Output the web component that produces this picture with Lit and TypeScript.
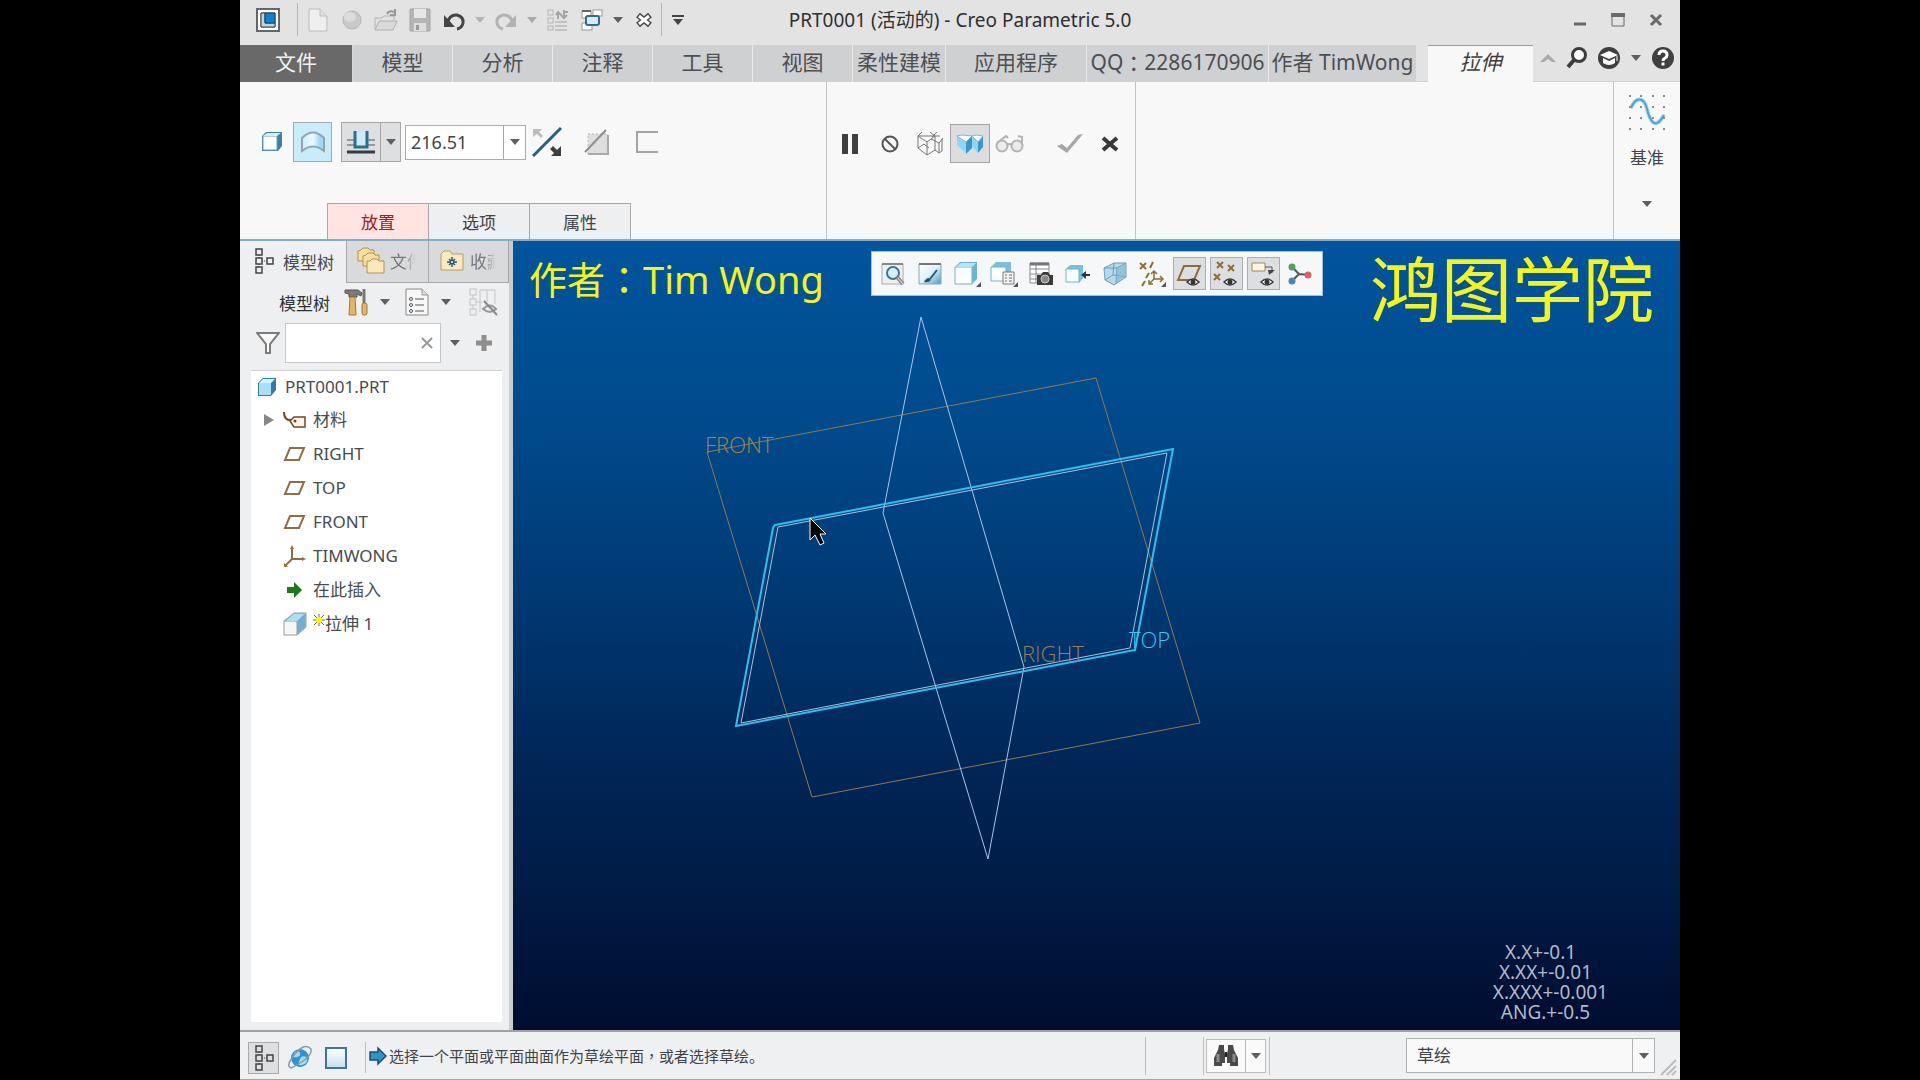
import { LitElement, html, svg, css, TemplateResult, SVGTemplateResult } from 'lit';
import { customElement } from 'lit/decorators.js';
import { classMap } from 'lit/directives/class-map.js';

const icon = (w: number, h: number, body: SVGTemplateResult) =>
  html`<svg class="icon" width=${w} height=${h} viewBox="0 0 ${w} ${h}" fill="none" aria-hidden="true">${body}</svg>`;

const arrow = (color = '#5f5f5f') => icon(12, 8, svg`<path d="M1 1h10L6 7z" fill=${color}/>`);

const treeNodes = (c: string) => svg`
  <g stroke=${c} stroke-width="1.500"><rect x="2" y="1" width="6" height="6"/><rect x="2" y="10" width="6" height="6"/>
  <rect x="2" y="19" width="6" height="6"/><rect x="13" y="10" width="6" height="6"/></g>
  <path d="M5 7v3M5 16v3M8 13h5" stroke=${c} stroke-dasharray="1 1"/>`;

const eye = svg`<path d="M12 23q6-6 12 0q-6 6-12 0z" fill="#fff" stroke="#3c3c3c" stroke-width="1.500"/><circle cx="18" cy="23" r="2.500" fill="#333"/>`;

const icons = {
  app: icon(24, 24, svg`<rect x="1" y="1" width="22" height="22" fill="#fff" stroke="#666" stroke-width="2"/>
    <path d="M5 5h14v14H5z" fill="#fff" stroke="#555" stroke-width="1"/><path d="M5 5h4v10h10v4H5z" fill="#bcd3e2" stroke="#444"/>
    <path d="M9 5h10v10H9z" fill="#0a82d8" stroke="#145"/>`),
  file: icon(22, 24, svg`<path d="M2 1h11l7 7v15H2z" fill="#efefef" stroke="#bdbdbd"/><path d="M13 1v7h7" fill="#ddd" stroke="#bdbdbd"/>`),
  globe: icon(22, 22, svg`<circle cx="11" cy="11" r="9" fill="#c9c9c9" stroke="#b5b5b5"/><ellipse cx="9" cy="8" rx="6" ry="5" fill="#dcdcdc"/>`),
  open: icon(26, 24, svg`<path d="M2 21V10h7l2-2h10v4" fill="#e2e2e2" stroke="#b0b0b0"/><path d="M2 22l4-9h18l-4 9z" fill="#d9d9d9" stroke="#b0b0b0"/>
    <path d="M14 6q2-4 7-2M22 1v6h-5" stroke="#999" stroke-width="2"/>`),
  save: icon(24, 24, svg`<path d="M2 1h20v22H2z" fill="#b5b5b5" stroke="#a5a5a5"/><path d="M6 1h12v9H6z" fill="#e6e6e6"/><path d="M6 15h12v8H6z" fill="#ddd"/><path d="M8 17h3v5H8z" fill="#999"/>`),
  undo: icon(24, 22, svg`<path d="M5 14Q8 5 15 6q7 2 6 8-1 5-6 6" stroke="#454545" stroke-width="3"/><path d="M2 6v12h11z" fill="#454545"/>`),
  redo: icon(24, 22, svg`<path d="M19 14Q16 5 9 6q-7 2-6 8 1 5 6 6" stroke="#b2b2b2" stroke-width="3"/><path d="M22 6v12H11z" fill="#b2b2b2"/>`),
  regen: icon(24, 24, svg`<g stroke="#b5b5b5"><rect x="2" y="2" width="5" height="5"/><rect x="2" y="10" width="5" height="5"/><rect x="2" y="18" width="5" height="4"/></g>
    <path d="M9 14h12M9 18h12M9 22h12" stroke="#c2c2c2" stroke-width="2"/><path d="M12 11V4M10 7l2-3 3 3M18 2v7M15 7l3 3 3-3M18 4h4" stroke="#a5a5a5" stroke-width="2"/>`),
  windows: icon(24, 24, svg`<rect x="2" y="3" width="9" height="7" fill="#fff" stroke="#999"/><path d="M2 3h9" stroke="#666" stroke-width="2"/>
    <rect x="13" y="2" width="9" height="6" fill="#fff" stroke="#999"/><rect x="2" y="15" width="10" height="7" fill="#fff" stroke="#999"/>
    <rect x="6" y="8" width="13" height="9" rx="2" fill="#d6ecf8" stroke="#2d6d91" stroke-width="2"/>`),
  closeWin: icon(20, 16, svg`<path d="M4 3l12 10M16 3L4 13" stroke="#4a4a4a" stroke-width="6"/><path d="M5 4l10 8M15 4L5 12" stroke="#f8f8f8" stroke-width="3"/>`),
  custom: icon(14, 12, svg`<path d="M1 2h12" stroke="#444" stroke-width="2"/><path d="M2 5h10l-5 6z" fill="#444"/>`),
  min: icon(16, 16, svg`<path d="M2 12h12" stroke="#666" stroke-width="3"/>`),
  max: icon(16, 16, svg`<path d="M2 2h12v12H2z" stroke="#6a6a6a" stroke-width="1"/><path d="M1 3h14" stroke="#6a6a6a" stroke-width="4"/>`),
  close: icon(16, 16, svg`<path d="M3 3l10 10M13 3L3 13" stroke="#6a6a6a" stroke-width="3"/>`),
  up: icon(18, 10, svg`<path d="M1 9l8-8 8 8H13L9 6 5 9z" fill="#ababab"/>`),
  search: icon(22, 22, svg`<circle cx="13" cy="8" r="6.500" fill="#fafafa" stroke="#3d3d3d" stroke-width="3"/><path d="M8 13l-6 7" stroke="#3d3d3d" stroke-width="4"/>`),
  hat: icon(24, 24, svg`<circle cx="12" cy="12" r="11" fill="#3f3f3f"/><path d="M3 9l9-4 9 4-9 4z" fill="#fff"/><path d="M6 12v5q6 4 12 0v-5l-6 3z" fill="#fff"/><path d="M20 10v5" stroke="#fff"/>`),
  help: icon(24, 24, svg`<circle cx="12" cy="12" r="11" fill="#3f3f3f"/><path d="M8 9q0-4 4-4t4 4q0 2-2 3t-2 3" stroke="#fff" stroke-width="3"/><path d="M10.500 16.500h3v3h-3z" fill="#fff"/>`),
  solid: icon(24, 24, svg`<path d="M2 6l4-4h16v14l-4 5H2z" fill="#3d80a3"/><path d="M3 6h14v14H3z" fill="#fff" stroke="#5fa3c4"/><path d="M3 6l4-3h14l-4 3z" fill="#d3eef9"/>`),
  surface: icon(26, 26, svg`<path d="M2 22V9q11-11 22 0v13q-11-9-22 0z" fill="url(#surf)" stroke="#94a4ad" stroke-width="2"/>
    <defs><linearGradient id="surf"><stop stop-color="#c9edfb"/><stop offset="0.500" stop-color="#eefaff"/><stop offset="0.800" stop-color="#9bd9f5"/></linearGradient></defs>`),
  depth: icon(30, 26, svg`<path d="M1 11h28M1 16h28" stroke="#9a9a9a" stroke-width="2"/><path d="M9 3h12v15H9z" fill="#c9ecfb"/><path d="M9 2v16h12V2" stroke="#2c6d90" stroke-width="3"/><path d="M1 23h28" stroke="#3a3a3a" stroke-width="3"/>`),
  flip: icon(30, 30, svg`<path d="M1 29L29 1" stroke="#25607f" stroke-width="3"/><path d="M1 2h9L7 5l4 4-2 2-4-4-4 3z" fill="#bdbdbd"/><path d="M29 29H19l3-3-4-4 3-3 4 4 4-4z" fill="#3f3f3f"/>`),
  cut: icon(28, 28, svg`<path d="M5 6h20v20H5z" fill="#dedede"/><path d="M5 26h20V7" stroke="#a9a9a9" stroke-width="2"/><path d="M5 26V6h20" stroke="#b3b3b3" stroke-dasharray="2 2"/><path d="M2 24L23 2" stroke="#8c8c8c" stroke-width="2"/>`),
  thicken: icon(22, 24, svg`<path d="M22 2H1v20h21" stroke="#a3a3a3" stroke-width="2"/>`),
  pause: icon(18, 22, svg`<path d="M1 1h6v20H1zM11 1h6v20h-6z" fill="#3f3f3f"/>`),
  none: icon(20, 20, svg`<circle cx="10" cy="10" r="7.500" stroke="#555" stroke-width="2"/><path d="M5 5l10 10" stroke="#555" stroke-width="2"/>`),
  wire: icon(30, 26, svg`<path d="M3 5h22M3 5v12l9 7M3 5l9 6v13M12 11l8-6M12 24l8-5M20 5v14M20 5l-5-4M16 8l8 4M24 12v10M24 12l4-5M24 22l3-2M3 5l4-4M17 6l5-5M20 19l4 3M27 8v12M3 17l6-4 5 4" stroke="#777"/>`),
  attached: icon(28, 22, svg`<path d="M1 3l9 5v12L1 12z" fill="#8fd5f5"/><path d="M10 8l6-5v12l-6 6z" fill="#3a97cc"/><path d="M1 3l5-1 10 1-6 6z" fill="#fbfeff" stroke="#8fb2c4"/>
    <path d="M16 3l6 5v12l-6-6z" fill="#8fd5f5"/><path d="M22 8l5-5v11l-5 6z" fill="#3a97cc"/><path d="M16 3l4-1 7 1-5 6z" fill="#fbfeff" stroke="#8fb2c4"/>`),
  glasses: icon(30, 20, svg`<circle cx="7" cy="12" r="5.500" stroke="#b3b3b3" stroke-width="2" fill="#ececec"/><circle cx="22" cy="12" r="5.500" stroke="#b3b3b3" stroke-width="2" fill="#ececec"/><path d="M12 11q2-2 5 0M2 9l9-7 2 2M27 10V3l-4-1" stroke="#b3b3b3" stroke-width="2"/>`),
  check: icon(28, 22, svg`<path d="M1 13l5-2 5 4L22 2l5-1L11 20z" fill="#a6a6a6"/>`),
  cross: icon(20, 16, svg`<path d="M3 2l14 12M17 2L3 14" stroke="#383838" stroke-width="4"/>`),
  datum: icon(38, 38, svg`<path d="M3 14C8 2 16 3 19 15s8 22 17 6" stroke="#a5daf2" stroke-width="4"/><path d="M3 14C8 2 16 3 19 15s8 22 17 6" stroke="#4aa3d0" stroke-width="2"/>
    <g fill="#8a8a8a">${[2, 13, 24, 35].map(y => [1, 12, 24, 35].map(x => svg`<rect x=${x} y=${y - 1} width="2" height="2"/>`))}</g>`),
  tree: icon(20, 26, treeNodes('#444')),
  folders: icon(28, 28, svg`<g fill="#f6dfa6" stroke="#b8904a"><path d="M1 14V4l3-1 2-2h5l2 2h4v11z"/><path d="M6 19V9l3-1 2-2h5l2 2h4v11z"/><path d="M10 26V14h3l2-2h5l2 2h5v12z" fill="#fbe8b8"/></g>`),
  fav: icon(26, 22, svg`<path d="M2 20V4l3-3h6l2 3h11v16z" fill="#fbe9c0" stroke="#c09a5a"/><path d="M13 7v10M8 12h10M10 9l6 6M16 9l-6 6" stroke="#1c5672" stroke-width="1.500"/><circle cx="13" cy="12" r="1" fill="#fff"/>`),
  tools: icon(24, 28, svg`<path d="M1 2h13l4 3-1 3-4-2v3H5V6L1 5z" fill="#7b7b7b" stroke="#555"/><path d="M6 9h5l1 18H5z" fill="#e3b564" stroke="#a9772d"/><path d="M20 1v14" stroke="#777" stroke-width="3"/><rect x="18" y="15" width="5" height="12" rx="2" fill="#e3b564" stroke="#a9772d"/>`),
  settings: icon(24, 28, svg`<path d="M1 1h16l6 6v20H1z" fill="#f7f7f7" stroke="#888"/><path d="M17 1v6h6" fill="#ddd" stroke="#999"/><g stroke="#555"><circle cx="6" cy="11" r="1.500"/><circle cx="6" cy="17" r="1.500"/><circle cx="6" cy="23" r="1.500"/><path d="M10 11h9M10 17h9M10 23h9"/></g>`),
  hidden: icon(30, 28, svg`<g stroke="#c4c4c4"><rect x="2" y="1" width="6" height="6"/><rect x="2" y="11" width="6" height="6"/><rect x="2" y="21" width="6" height="6"/><path d="M5 7v4M5 17v4M8 14h6M12 2h15v14M12 2v22M19 2v12"/></g>
    <path d="M15 21q7-7 13 0-6 6-13 0z" stroke="#999" stroke-width="2"/><path d="M16 13l13 14" stroke="#888" stroke-width="2"/>`),
  filter: icon(24, 24, svg`<path d="M1 2h22l-9 11v9h-4v-9z" fill="#fafafa" stroke="#7c7c7c" stroke-width="2"/>`),
  clear: icon(14, 14, svg`<path d="M2 2l10 10M12 2L2 12" stroke="#989898" stroke-width="2"/>`),
  plus: icon(18, 18, svg`<path d="M9 1v16M1 9h16" stroke="#8e8e8e" stroke-width="5"/>`),
  part: icon(20, 20, svg`<path d="M1 6l5-5h13v12l-5 6H1z" fill="#2e7da3"/><path d="M2 6h12v12H2z" fill="#a5e0f6"/><path d="M2 6l4-4h12l-4 4z" fill="#d8f4fd"/>`),
  expand: icon(12, 14, svg`<path d="M1 1l10 6-10 6z" fill="#888"/>`),
  material: icon(24, 18, svg`<path d="M1 1q0 9 8 8" stroke="#6a4a28" stroke-width="2"/><path d="M7 10l4-4h11v10H11z" fill="#fdf3e6" stroke="#6a4a28" stroke-width="1.500"/><circle cx="12" cy="10" r="1.500" fill="#6a4a28"/>`),
  plane: icon(24, 18, svg`<path d="M7 3h14l-5 12H2z" stroke="#8b6f47" stroke-width="2"/>`),
  csys: icon(24, 24, svg`<path d="M9 3v12h12M9 15l-7 7" stroke="#8b6f47" stroke-width="2"/><path d="M7 5l2-4 2 4zM19 13l4 2-4 2zM1 19v4h4z" fill="#8b6f47"/>`),
  insert: icon(24, 18, svg`<path d="M4 6h7V1l8 8-8 8v-5H4z" fill="#1a7a1a"/>`),
  extrude: icon(24, 24, svg`<path d="M1 9l10-8h12v14l-9 8z" fill="#8fc4de" stroke="#7aa6bd"/><path d="M1 9h13v14H1z" fill="#f6f6f6" stroke="#9a9a9a"/><path d="M14 9l8-7v13l-8 8z" fill="#74aecd"/><path d="M3 9l8-7h10l-7 7z" fill="#b5dcee"/>`),
  star: icon(12, 12, svg`<path d="M6 0v12M0 6h12M1 1l10 10M11 1L1 11" stroke="#77701a"/><circle cx="6" cy="6" r="3" fill="#fff200"/>`),
  zoom: icon(24, 24, svg`<path d="M1 2h21v20H1z" fill="#eef0f0" stroke="#aaa"/><path d="M1 2h21" stroke="#888" stroke-width="2"/><circle cx="12" cy="11" r="6" fill="#d5eff8" stroke="#387792" stroke-width="2"/><path d="M16 15l6 7" stroke="#888" stroke-width="4"/><path d="M17 16l5 6" stroke="#eee" stroke-width="1"/>`),
  repaint: icon(24, 24, svg`<path d="M1 2h22v20H1z" fill="url(#rp)" stroke="#8aa"/><path d="M1 2h22" stroke="#777" stroke-width="2"/><path d="M19 8l-7 9" stroke="#225d7c" stroke-width="2"/><path d="M6 20q2-4 5-4l2 2q-2 3-7 2z" fill="#1f5674"/>
    <defs><linearGradient id="rp" x2="1" y2="1"><stop stop-color="#fff"/><stop offset="0.500" stop-color="#dff2fa"/><stop offset="1" stop-color="#3e9ac4"/></linearGradient></defs>`),
  shade: icon(28, 28, svg`<path d="M2 7l5-5h17v17l-5 5z" fill="#69b5d8"/><path d="M2 7h17v17H2z" fill="#fafeff" stroke="#71b2d0"/><path d="M3 7l5-4h15l-4 4z" fill="#b8e4f6"/><path d="M28 22v5h-5z" fill="#555"/>`),
  views: icon(28, 28, svg`<path d="M1 7l5-5h15v17l-3 3z" fill="#7abfdd"/><path d="M1 7h15v14H1z" fill="#fafeff" stroke="#71b2d0"/><path d="M13 12h11v12H13z" fill="#f5f5f5" stroke="#777"/><path d="M15 15h2M19 15h3M15 18h2M19 18h3M15 21h2M19 21h3" stroke="#666"/><path d="M28 22v5h-5z" fill="#555"/>`),
  camera: icon(26, 26, svg`<path d="M2 2h19v20H2z" fill="#fff" stroke="#888"/><path d="M2 3h19" stroke="#777" stroke-width="3"/><path d="M2 8h19M2 13h19M2 18h19M8 2v20" stroke="#888"/><path d="M9 14h4l2-3h5l2 3h3v10H9z" fill="#3b3b3b"/><circle cx="17" cy="18" r="4" fill="#888" stroke="#ccc"/>`),
  section: icon(26, 24, svg`<path d="M1 7l4-4h13v13l-4 5z" fill="#7abfdd"/><path d="M1 7h13v13H1z" fill="#fafeff" stroke="#71b2d0"/><path d="M25 13h-6" stroke="#333" stroke-width="2"/><path d="M16 13l5-4v8z" fill="#333"/>`),
  persp: icon(26, 26, svg`<path d="M2 7l10-5h12v14l-12 8-9-5z" fill="#b6d9ea" stroke="#6d9db5"/><path d="M2 7h13l9-5M15 7l-1 16M3 19l8-5 13 2M12 2l-1 12" stroke="#6d9db5"/><path d="M15 7l9-4v12l-10 7z" fill="#7cb5d2" opacity="0.600"/>`),
  datums: icon(28, 28, svg`<path d="M2 3l6 6M8 3L2 9M15 2l-3 6M11 13l-3 5M7 21l-3 5" stroke="#8b6f35" stroke-width="2"/><path d="M16 12v7h8M16 19l-4 4M13 14l3-3 3 3M22 16l3 3-3 3M11 20v4h4" stroke="#8b6f35" stroke-width="1.500"/><path d="M28 22v5h-5z" fill="#555"/>`),
  planeOn: icon(28, 30, svg`<path d="M9 7h16l-6 14H3z" stroke="#8b6f35" stroke-width="2"/>${eye}`),
  pointOn: icon(28, 30, svg`<path d="M5 3l6 6M11 3L5 9M16 6l6 6M22 6l-6 6M2 15l6 6M8 15l-6 6" stroke="#8b6f35" stroke-width="2"/>${eye}`),
  noteOn: icon(28, 30, svg`<path d="M3 4h13v8H3z" fill="#fff6df" stroke="#9b8a5a"/><path d="M16 8h7v6" stroke="#555"/><path d="M19 11h7l-6 5z" fill="#444"/>${eye}`),
  spin: icon(26, 24, svg`<path d="M12 12L5 5M12 12l10 1M12 12l-7 7" stroke="#555" stroke-width="2"/><circle cx="5" cy="5" r="3.500" fill="#5b9a5b"/><circle cx="21" cy="13" r="3.500" fill="#e06060"/><circle cx="5" cy="19" r="3.500" fill="#4b86b4"/>`),
  browser: icon(26, 26, svg`<circle cx="13" cy="13" r="9" fill="#2f94cf"/><path d="M8 7q4-2 5 1t-3 4-4-1zM14 12q5-2 6 2t-5 6-1-8z" fill="#a8dbf5"/><path d="M4 23Q-2 21 8 9T24 4q1 6-8 12T4 23z" stroke="#8b9aa3" stroke-width="1.500"/>`),
  page: icon(24, 24, svg`<path d="M2 2h20v20H2z" fill="url(#pg)" stroke="#3f7593" stroke-width="2"/><defs><linearGradient id="pg" x2="0" y2="1"><stop stop-color="#fff"/><stop offset="1" stop-color="#c3e0ee"/></linearGradient></defs>`),
  next: icon(18, 20, svg`<path d="M1 6h8V2l8 8-8 8v-4H1z" fill="#2d93cc" stroke="#1c4f6c" stroke-width="1.500"/>`),
  find: icon(26, 24, svg`<path d="M6 1h5v4l1 5v9H9v3H1v-8L5 6z" fill="#4a4a4a"/><path d="M20 1h-5v4l-1 5v9h3v3h8v-8l-4-8z" fill="#4a4a4a"/><path d="M5 10v8M21 10v8" stroke="#8a8a8a" stroke-width="3"/><path d="M12 8h2v5h-2z" fill="#222"/>`),
  grip: icon(18, 18, svg`<path d="M2 17L17 2M8 17l9-9M13 17l4-4" stroke="#bcbcbc" stroke-width="2"/>`),
};

/* Shared look of every flat button and icon. */
const base = css`
  *, :host { box-sizing: border-box; }
  button, input, select { font: inherit; color: inherit; margin: 0; padding: 0; border: 0; background: none; border-radius: 0; outline: none; }
  button { display: flex; align-items: center; justify-content: center; flex: none; }
  .icon { display: block; flex: none; }
`;

/* Full-width colon and comma set in the middle of their cell. */
const mid = (t: string) => html`<span class="mid">${t}</span>`;

@customElement('title-bar')
class TitleBar extends LitElement {
  static styles = [base, css`
    :host { display: grid; grid-template-columns: 1fr auto 1fr; align-items: center; height: 45px; padding: 0 16px 6px; background: #e3e3e3; color: #2f2f2f; font-size: 19px; }
    .quick { display: flex; align-items: center; }
    .quick button { width: 34px; height: 32px; }
    .quick .drop { width: 18px; }
    .app { margin-right: 17px; }
    .rule { width: 1px; height: 33px; background: #b5b5b5; margin-right: 3px; }
    .quick .custom { width: 26px; }
    h1 { margin: 0; font-size: inherit; font-weight: 400; line-height: 26px; white-space: nowrap; }
    .window { display: flex; justify-content: flex-end; gap: 22px; }
    .window button { width: 16px; height: 24px; }
  `];
  render() {
    return html`
      <div class="quick">
        <span class="app">${icons.app}</span><span class="rule"></span>
        <button aria-label="新建">${icons.file}</button>
        <button aria-label="联机">${icons.globe}</button>
        <button aria-label="打开">${icons.open}</button>
        <button aria-label="保存">${icons.save}</button>
        <button aria-label="撤消">${icons.undo}</button>
        <button class="drop" aria-label="撤消列表">${arrow('#b4b4b4')}</button>
        <button aria-label="重做">${icons.redo}</button>
        <button class="drop" aria-label="重做列表">${arrow('#a9a9a9')}</button>
        <button aria-label="重新生成">${icons.regen}</button>
        <button aria-label="窗口">${icons.windows}</button>
        <button class="drop" aria-label="窗口列表">${arrow()}</button>
        <button aria-label="关闭窗口">${icons.closeWin}</button>
        <span class="rule"></span>
        <button class="custom" aria-label="自定义快速访问工具栏">${icons.custom}</button>
      </div>
      <h1>PRT0001 (活动的) - Creo Parametric 5.0</h1>
      <div class="window">
        <button aria-label="最小化">${icons.min}</button>
        <button aria-label="最大化">${icons.max}</button>
        <button aria-label="关闭">${icons.close}</button>
      </div>`;
  }
}

@customElement('ribbon-tabs')
class RibbonTabs extends LitElement {
  static styles = [base, css`
    :host { display: flex; height: 37px; background: #e3e3e3; color: #4c4f52; font-size: 21px; line-height: 30px; box-shadow: inset 0 -1px #cfcfcf; }
    button { width: 100px; padding-bottom: 4px; background: #cfd0d2; border-right: 1px solid #e9e9e9; white-space: nowrap; overflow: hidden; }
    .file { width: 113px; background: #696969; color: #f2f2f2; border-right-color: #d8d8d8; }
    .snug { width: 93px; }
    .wide { width: 141px; }
    .qq { width: 182px; }
    .author { width: 147px; border-right: 0; }
    .active { width: 105px; margin-left: 12px; background: #f8f8f8; border-right: 0; border-top: 1px solid #9a9a9a; font-style: italic; color: #3d3d3d; }
    .mid { font-family: "Noto Sans CJK TC", sans-serif; }
    .help { flex: 1; display: flex; align-items: center; justify-content: flex-end; padding: 0 5px 12px 0; gap: 9px; }
    .help button { width: auto; background: none; border: 0; padding: 0; }
  `];
  render() {
    return html`
      <button class="file">文件</button>
      ${['模型', '分析', '注释', '工具', '视图'].map(t => html`<button>${t}</button>`)}
      <button class="snug">柔性建模</button>
      <button class="wide">应用程序</button>
      <button class="qq">QQ${mid('：')}2286170906</button>
      <button class="author">作者 TimWong</button>
      <button class="active">拉伸</button>
      <div class="help">
        <button aria-label="最小化功能区">${icons.up}</button>
        <button aria-label="搜索">${icons.search}</button>
        <button aria-label="学习">${icons.hat}</button>
        <button aria-label="学习列表">${arrow()}</button>
        <button aria-label="帮助">${icons.help}</button>
      </div>`;
  }
}

@customElement('ribbon-panel')
class RibbonPanel extends LitElement {
  static styles = [base, css`
    :host { display: grid; grid-template-columns: 587fr 309fr 478fr 66px; height: 159px; background: #f8f8f8; border-bottom: 2px solid #7faecb; color: #3f4347; }
    .group { display: flex; flex-direction: column; justify-content: space-between; border-right: 1px solid #c2c2c2; min-width: 0; }
    .row { display: flex; align-items: center; }
    .extrude { padding: 40px 0 0 15px; gap: 4px; }
    .tool { width: 34px; height: 40px; }
    .apart { margin-left: 12px; }
    .on { width: 39px; background: #c8ecfa; border: 1px solid #a4a9ac; }
    .split { display: flex; height: 40px; margin-left: 5px; border: 1px solid #a6a6a6; background: #dedfe0; }
    .split .main { width: 38px; }
    .split .drop, .combo .drop { width: 20px; border-left: 1px solid #a6a6a6; }
    .combo { display: flex; width: 121px; height: 35px; border: 1px solid #ababab; background: #fff; font-size: 18px; }
    .combo input { flex: 1; min-width: 0; padding-left: 5px; }
    .combo .drop { width: 22px; }
    .slide { display: flex; padding-left: 87px; font-size: 17px; }
    .slide button { width: 102px; height: 36px; margin-right: -1px; border: 1px solid #a8a8a8; border-bottom: 0; background: #eeeff0; }
    .slide .need { background: #ffe4e2; color: #9a2020; }
    .confirm { padding: 42px 0 0 3px; }
    .confirm button { width: 40px; height: 39px; }
    .confirm .pressed { background: #dcdddf; border: 1px solid #a4a4a4; }
    .confirm .gap { margin-left: 20px; }
    .datum { flex-direction: column; justify-content: flex-start; width: auto; padding-top: 12px; font-size: 17px; }
    .datum span { margin: 12px 0 28px; line-height: 28px; }
  `];
  render() {
    return html`
      <div class="group">
        <div class="row extrude">
          <button class="tool" aria-label="实体">${icons.solid}</button>
          <button class="tool on" aria-label="曲面">${icons.surface}</button>
          <div class="split">
            <button class="main" aria-label="深度类型">${icons.depth}</button>
            <button class="drop" aria-label="深度选项">${arrow()}</button>
          </div>
          <div class="combo">
            <input aria-label="深度" value="216.51">
            <button class="drop" aria-label="最近的值">${arrow()}</button>
          </div>
          <button class="tool" aria-label="反向">${icons.flip}</button>
          <button class="tool apart" aria-label="移除材料">${icons.cut}</button>
          <button class="tool apart" aria-label="加厚草绘">${icons.thicken}</button>
        </div>
        <div class="slide"><button class="need">放置</button><button>选项</button><button>属性</button></div>
      </div>
      <div class="group">
        <div class="row confirm">
          <button aria-label="暂停">${icons.pause}</button>
          <button aria-label="无预览">${icons.none}</button>
          <button aria-label="分离">${icons.wire}</button>
          <button class="pressed" aria-label="连接">${icons.attached}</button>
          <button aria-label="验证">${icons.glasses}</button>
          <button class="gap" aria-label="确定">${icons.check}</button>
          <button aria-label="取消">${icons.cross}</button>
        </div>
      </div>
      <div class="group"></div>
      <button class="datum">${icons.datum}<span>基准</span>${arrow()}</button>`;
  }
}

interface TreeItem { icon: TemplateResult; text: string; open?: boolean; fresh?: boolean; }
const items: TreeItem[] = [
  { icon: icons.material, text: '材料', open: true },
  { icon: icons.plane, text: 'RIGHT' },
  { icon: icons.plane, text: 'TOP' },
  { icon: icons.plane, text: 'FRONT' },
  { icon: icons.csys, text: 'TIMWONG' },
  { icon: icons.insert, text: '在此插入' },
  { icon: icons.extrude, text: '拉伸 1', fresh: true },
];

@customElement('model-tree')
class ModelTree extends LitElement {
  static styles = [base, css`
    :host { display: flex; flex-direction: column; background: #eeeff1; border-right: 4px solid #c9cdd2; color: #474b50; font-size: 17px; min-height: 0; }
    .tabs { display: grid; grid-template-columns: 106px 82px 81px; height: 42px; flex: none; }
    .tabs button { justify-content: flex-start; gap: 9px; padding-left: 14px; padding-bottom: 2px; overflow: hidden; white-space: nowrap; }
    .tabs .back { background: #d9dadc; border: 1px solid #a7a7a7; border-top: 0; border-right: 0; padding-left: 10px; gap: 5px; color: #777; }
    .tabs .back:last-child { border-right: 1px solid #a7a7a7; }
    .tabs .back span { width: 26px; overflow: hidden; mask-image: linear-gradient(90deg, #000 50%, transparent); }
    .head { display: flex; align-items: center; height: 38px; padding-left: 39px; color: #2f3338; }
    .head button { height: 30px; }
    .head .tool { margin-left: 14px; }
    .head .arrow { margin-left: 11px; }
    .head .hide { margin-left: 16px; }
    .search { display: flex; align-items: center; height: 44px; padding: 2px 0 2px 16px; }
    .field { display: flex; width: 156px; height: 40px; margin: 0 8px 0 5px; padding-right: 6px; border: 1px solid #c3c5c8; background: #fff; }
    .field input { flex: 1; min-width: 0; padding-left: 6px; }
    .plus { margin-left: 14px; }
    .tree { flex: 1; margin: 5px 7px 8px 11px; padding: 0; background: #fff; border-top: 1px solid #cfd0d2; list-style: none; }
    .tree li { display: flex; align-items: center; height: 34px; padding-left: 32px; line-height: 24px; }
    .tree .root { padding-left: 6px; gap: 8px; height: 32px; }
    .tree .open { padding-left: 12px; }
    .twist { width: 20px; }
    .kind { width: 30px; }
    .star { align-self: flex-start; padding-top: 7px; }
  `];
  render() {
    return html`
      <div class="tabs">
        <button>${icons.tree}<span>模型树</span></button>
        <button class="back">${icons.folders}<span>文件</span></button>
        <button class="back">${icons.fav}<span>收藏</span></button>
      </div>
      <div class="head">模型树
        <button class="tool" aria-label="设置">${icons.tools}</button>
        <button class="arrow" aria-label="设置列表">${arrow()}</button>
        <button class="tool" aria-label="显示">${icons.settings}</button>
        <button class="arrow" aria-label="显示列表">${arrow()}</button>
        <button class="hide" aria-label="隐藏项">${icons.hidden}</button>
      </div>
      <div class="search">
        ${icons.filter}
        <div class="field"><input aria-label="过滤树"><button aria-label="清除">${icons.clear}</button></div>
        <button aria-label="搜索选项">${arrow()}</button>
        <button class="plus" aria-label="添加">${icons.plus}</button>
      </div>
      <ul class="tree">
        <li class="root">${icons.part}<span>PRT0001.PRT</span></li>
        ${items.map(i => html`<li class=${classMap({ open: !!i.open })}>
          ${i.open ? html`<span class="twist">${icons.expand}</span>` : ''}
          <span class="kind">${i.icon}</span>
          ${i.fresh ? html`<span class="star">${icons.star}</span>` : ''}<span>${i.text}</span></li>`)}
      </ul>`;
  }
}

interface View { name: string; icon: TemplateResult; on?: boolean; }
const views: View[] = [
  { name: '重新调整', icon: icons.zoom }, { name: '重画', icon: icons.repaint },
  { name: '显示样式', icon: icons.shade }, { name: '已保存方向', icon: icons.views },
  { name: '视图管理器', icon: icons.camera }, { name: '截面', icon: icons.section },
  { name: '透视图', icon: icons.persp }, { name: '基准显示过滤器', icon: icons.datums },
  { name: '平面显示', icon: icons.planeOn, on: true }, { name: '点显示', icon: icons.pointOn, on: true },
  { name: '注释显示', icon: icons.noteOn, on: true }, { name: '旋转中心', icon: icons.spin },
];

@customElement('graphics-area')
class GraphicsArea extends LitElement {
  static styles = [base, css`
    :host { display: flex; justify-content: center; align-items: flex-start; position: relative; overflow: hidden; padding-top: 10px; min-width: 0; min-height: 0;
      background: linear-gradient(#00559d, #00498a 25%, #003872 46%, #002657 66%, #001a44 84%, #000d2f); }
    .scene { position: absolute; inset: 0; width: 100%; height: 100%; font-family: "Open Sans", "Noto Sans", sans-serif; font-weight: 300; font-size: 22px; }
    .bar { display: flex; align-items: center; height: 45px; padding: 0 3px; background: #f6f7f8; border: 1px solid #a9bccd; position: relative; }
    .bar button { width: 33px; height: 33px; margin: 0 2px; border: 1px solid transparent; }
    .bar .on { background: #dcdee1; border-color: #a9acb0; }
    .mark { position: absolute; color: #f4f416; white-space: nowrap; line-height: 1; margin: 0; }
    .author { left: 16px; top: 18px; font-size: 38px; }
    .school { right: 26px; top: 12px; font-size: 71px; }
    .mid { font-family: "Noto Sans CJK TC", sans-serif; }
    .tol { position: absolute; right: 72px; bottom: 8px; margin: 0; color: #aeb9ca; font-size: 19px; line-height: 20px; text-align: center; }
  `];
  render() {
    return html`
      <svg class="scene" viewBox="513 241 1167 789" fill="none" role="img" aria-label="基准平面">
        <path d="M707 452L1096 378 1200 723 812 797z" stroke="#8f7a4a"/>
        <path d="M921 317L883 513 988 859 1024 667z" stroke="#a9c4e6"/>
        <path d="M778 527L1167 453 1130 648 741 723z" stroke="#a9c3df"/>
        <path d="M775 525L1173 449 1135 650 736 726 773 528z" stroke="#2fc0ea" stroke-width="2"/>
        <text x="705" y="453" fill="#a5854a">FRONT</text>
        <text x="1022" y="662" fill="#958159">RIGHT</text>
        <text x="1129" y="648" fill="#3cc7ee">TOP</text>
        <path d="M810 518v22l5-5 5 10 4-2-4-9h6z" fill="#000" stroke="#fff"/>
      </svg>
      <div class="bar" role="toolbar">
        ${views.map(v => html`<button class=${classMap({ on: !!v.on })} aria-label=${v.name}>${v.icon}</button>`)}
      </div>
      <p class="mark author">作者${mid('：')}Tim Wong</p>
      <p class="mark school">鸿图学院</p>
      <p class="tol">X.X+-0.1&nbsp;&nbsp;&nbsp;&nbsp;<br>X.XX+-0.01&nbsp;&nbsp;<br>X.XXX+-0.001<br>ANG.+-0.5&nbsp;&nbsp;</p>`;
  }
}

@customElement('status-bar')
class StatusBar extends LitElement {
  static styles = [base, css`
    :host { display: flex; align-items: center; height: 50px; padding: 0 3px 0 8px; background: #eff0f1; border-top: 2px solid #9da0a5; border-bottom: 1px solid #a5a5a5; color: #3f4347; font-size: 17px; }
    .toggle { width: 31px; height: 32px; margin: 5px 5px 0 0; }
    .on { border: 1px solid #a9a9a9; background: #dedfe0; }
    .rule { width: 1px; height: 38px; background: #bdbfc1; }
    .short { height: 31px; margin: 4px 3px 0 9px; }
    .message { flex: 1; display: flex; align-items: center; font-size: 15px; white-space: nowrap; }
    .message .icon { margin-right: 2px; }
    .mid { font-family: "Noto Sans CJK TC", sans-serif; }
    .find { display: flex; width: 60px; height: 34px; margin: 0 3px 0 2px; border: 1px solid #bcbcbc; background: #fafafa; }
    .find .main { flex: 1; }
    .find .drop { width: 20px; border-left: 1px solid #bcbcbc; }
    .pick { display: grid; grid-template-columns: 1fr 22px; width: 249px; height: 35px; margin: 0 4px 0 136px; border: 1px solid #b0b2b4; background: #f9f9f9; }
    .pick select { grid-area: 1 / 1 / 2 / 3; appearance: none; padding-left: 10px; }
    .pick .drop { grid-area: 1 / 2; display: flex; align-items: center; justify-content: center; border-left: 1px solid #b0b2b4; pointer-events: none; }
    .grip { align-self: flex-end; padding-bottom: 3px; }
    .space { width: 57px; }
  `];
  render() {
    return html`
      <button class="toggle on" aria-label="模型树">${icons.tree}</button>
      <button class="toggle" aria-label="浏览器">${icons.browser}</button>
      <button class="toggle" aria-label="全屏">${icons.page}</button>
      <span class="rule short"></span>
      <div class="message" role="status">${icons.next}<span>选择一个平面或平面曲面作为草绘平面${mid('，')}或者选择草绘。</span></div>
      <span class="rule"></span><span class="space"></span><span class="rule"></span>
      <div class="find"><button class="main" aria-label="查找">${icons.find}</button><button class="drop" aria-label="查找选项">${arrow()}</button></div>
      <span class="rule"></span>
      <div class="pick"><select aria-label="选择过滤器"><option>草绘</option></select><span class="drop">${arrow()}</span></div>
      <span class="grip">${icons.grip}</span>`;
  }
}

@customElement('app-root')
class AppRoot extends LitElement {
  static styles = css`
    :host { display: flex; justify-content: center; height: 100vh; background: #000; font-family: "Noto Sans", "Noto Sans CJK SC", sans-serif; }
    .window { display: grid; grid-template-rows: auto auto auto 1fr auto; height: 100%; aspect-ratio: 4 / 3; overflow: hidden; }
    .work { display: grid; grid-template-columns: 273px 1fr; min-height: 0; }
  `;
  render() {
    return html`<main class="window">
      <title-bar></title-bar>
      <ribbon-tabs></ribbon-tabs>
      <ribbon-panel></ribbon-panel>
      <div class="work"><model-tree></model-tree><graphics-area></graphics-area></div>
      <status-bar></status-bar>
    </main>`;
  }
}
